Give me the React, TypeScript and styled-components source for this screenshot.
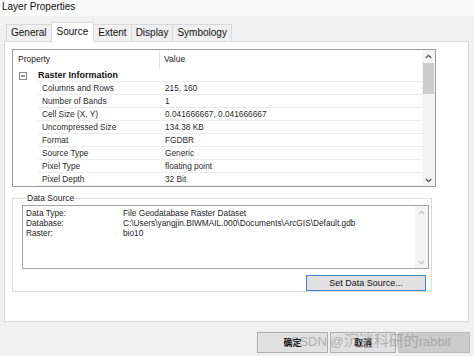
import React from 'react';
import styled, { createGlobalStyle } from 'styled-components';

const Global = createGlobalStyle`
  html, body { margin: 0; padding: 0; background: #f0f0f0; }
  body { font-family: "Liberation Sans", Arial, "Noto Sans CJK SC", sans-serif; color: #1a1a1a; }
`;

const Window = styled.div`
  width: 474px;
  height: 356px;
  background: #f0f0f0;
  position: relative;
  overflow: hidden;
  display: flex;
  flex-direction: column;
`;

const TitleBar = styled.div`
  height: 16px;
  background: #fafafa;
  font-size: 10px;
  line-height: 14px;
  padding-left: 2px;
  color: #111;
`;

const TabStrip = styled.div`
  display: flex;
  align-items: flex-end;
  height: 20px;
  margin: 6px 0 -1px 6px;
  position: relative;
  z-index: 1;
`;

const Tab = styled.div<{ $active?: boolean }>`
  box-sizing: border-box;
  height: ${p => (p.$active ? 20 : 17)}px;
  margin-bottom: ${p => (p.$active ? 0 : 1)}px;
  margin-left: -1px;
  padding: 0 ${p => (p.$active ? 5 : 4)}px;
  border: 1px solid #d9d9d9;
  border-bottom: none;
  background: ${p => (p.$active ? '#ffffff' : '#f0f0f0')};
  font-size: 10px;
  line-height: ${p => (p.$active ? 17 : 15)}px;
  color: #111;
  white-space: nowrap;
  &:first-child { margin-left: 0; }
`;

const Panel = styled.div`
  box-sizing: border-box;
  height: 281px;
  margin: 0 5px 0 4px;
  background: #ffffff;
  border: 1px solid #d9d9d9;
  padding: 7px 0 0 7px;
  display: flex;
  flex-direction: column;
`;

const Grid = styled.div`
  box-sizing: border-box;
  width: 424px;
  height: 138px;
  border: 1px solid #9c9c9c;
  display: flex;
`;

const GridBody = styled.div`
  flex: 1;
  display: flex;
  flex-direction: column;
  font-size: 8.3px;
`;

const HeaderRow = styled.div`
  display: flex;
  height: 19px;
  flex: none;
  align-items: stretch;
`;

const HeaderCell = styled.div<{ $w?: number }>`
  ${p => (p.$w ? `width: ${p.$w}px;` : 'flex: 1;')}
  box-sizing: border-box;
  padding-left: ${p => (p.$w ? 5 : 4)}px;
  line-height: 19px;
  font-size: 8.5px;
  color: #222;
  ${p => (p.$w ? 'border-right: 1px solid #e3e3e3;' : '')}
`;

const Row = styled.div`
  display: flex;
  height: 13px;
  flex: none;
`;

const Indent = styled.div`
  width: 25px;
  display: flex;
  align-items: center;
  justify-content: flex-start;
  padding-left: 6px;
  box-sizing: border-box;
`;

const Cells = styled.div`
  flex: 1;
  display: flex;
  border-bottom: 1px solid #ececec;
  box-sizing: border-box;
`;

const PropCell = styled.div<{ $bold?: boolean }>`
  width: 122px;
  box-sizing: border-box;
  padding-left: ${p => (p.$bold ? 0 : 4)}px;
  line-height: 12px;
  font-weight: ${p => (p.$bold ? 700 : 400)};
  font-size: ${p => (p.$bold ? 9 : 8.3)}px;
  color: ${p => (p.$bold ? '#111' : '#2a2a2a')};
  white-space: nowrap;
`;

const ValueCell = styled.div`
  flex: 1;
  padding-left: 5px;
  line-height: 12px;
  color: #2a2a2a;
  white-space: nowrap;
`;

const VScroll = styled.div`
  width: 13px;
  background: #f4f4f4;
  display: flex;
  flex-direction: column;
  align-items: center;
  justify-content: space-between;
`;

const ArrowBtn = styled.div`
  height: 12px;
  width: 13px;
  display: flex;
  align-items: center;
  justify-content: center;
`;

const Track = styled.div`
  flex: 1;
  width: 13px;
  display: flex;
  flex-direction: column;
  align-items: center;
`;

const Thumb = styled.div`
  width: 11px;
  height: 31px;
  margin-top: 1px;
  background: #cdcdcd;
`;

const Group = styled.fieldset`
  box-sizing: border-box;
  width: 420px;
  height: 99px;
  margin: 6px 0 0 0;
  padding: 2px 2px 0 9px;
  border: 1px solid #dcdcdc;
  min-width: 0;
`;

const Legend = styled.legend`
  font-size: 8.5px;
  line-height: 10px;
  padding: 0 1px;
  margin-left: 4px;
  color: #222;
`;

const TextBox = styled.div`
  box-sizing: border-box;
  height: 64px;
  border: 1px solid #a4a4a4;
  display: flex;
  background: #fff;
`;

const TextArea = styled.div`
  flex: 1;
  padding: 2px 0 0 3px;
  font-size: 8.3px;
  line-height: 10px;
  color: #1e1e1e;
`;

const InfoLine = styled.div`
  display: flex;
  white-space: nowrap;
`;

const InfoLabel = styled.span`
  width: 97px;
`;

const ButtonRow = styled.div<{ $pad?: string }>`
  display: flex;
  justify-content: flex-end;
  gap: 2px;
  padding: ${p => p.$pad || '0'};
`;

const Button = styled.div<{ $w: number; $h: number; $focused?: boolean; $disabled?: boolean }>`
  box-sizing: border-box;
  width: ${p => p.$w}px;
  height: ${p => p.$h}px;
  border: 1px solid ${p => (p.$focused ? '#3d86cf' : p.$disabled ? '#bcbcbc' : '#adadad')};
  background: ${p => (p.$disabled ? '#cccccc' : '#e1e1e1')};
  display: flex;
  align-items: center;
  justify-content: center;
  font-size: 9px;
  color: #111;
  white-space: nowrap;
`;

const CjkLabel = styled.span`
  font-family: "Noto Sans CJK SC", sans-serif;
  font-size: 9px;
  font-weight: 700;
`;

const Footer = styled.div`
  flex: 1;
  position: relative;
`;

const Watermark = styled.div`
  position: absolute;
  left: 290px;
  top: 331px;
  font-size: 13px;
  line-height: 18px;
  color: rgba(140, 140, 140, 0.6);
  white-space: nowrap;
  pointer-events: none;
`;

const WmCjk = styled.span`
  font-family: "Noto Sans CJK SC", sans-serif;
  font-size: 15px;
`;

const Chevron = ({ up, color }: { up?: boolean; color: string }) => (
  <svg width="7" height="5" viewBox="0 0 7 5">
    <path d={up ? 'M0.8 4 L3.5 1.3 L6.2 4' : 'M0.8 1 L3.5 3.7 L6.2 1'} fill="none" stroke={color} strokeWidth="1.2" />
  </svg>
);

const Collapse = () => (
  <svg width="8" height="8" viewBox="0 0 8 8">
    <rect x="0.5" y="0.5" width="7" height="7" fill="#fff" stroke="#8a8a8a" />
    <path d="M2 4 H6" stroke="#333" strokeWidth="1" />
  </svg>
);

const rows: [string, string][] = [
  ['Columns and Rows', '215, 160'],
  ['Number of Bands', '1'],
  ['Cell Size (X, Y)', '0.041666667, 0.041666667'],
  ['Uncompressed Size', '134.38 KB'],
  ['Format', 'FGDBR'],
  ['Source Type', 'Generic'],
  ['Pixel Type', 'floating point'],
  ['Pixel Depth', '32 Bit'],
];

const info: [string, string][] = [
  ['Data Type:', 'File Geodatabase Raster Dataset'],
  ['Database:', 'C:\\Users\\yangjin.BIWMAIL.000\\Documents\\ArcGIS\\Default.gdb'],
  ['Raster:', 'bio10'],
];

export default function App() {
  return (
    <Window>
      <Global />
      <TitleBar>Layer Properties</TitleBar>
      <TabStrip>
        <Tab>General</Tab>
        <Tab $active>Source</Tab>
        <Tab>Extent</Tab>
        <Tab>Display</Tab>
        <Tab>Symbology</Tab>
      </TabStrip>
      <Panel>
        <Grid>
          <GridBody>
            <HeaderRow>
              <HeaderCell $w={147}>Property</HeaderCell>
              <HeaderCell>Value</HeaderCell>
            </HeaderRow>
            <Row>
              <Indent><Collapse /></Indent>
              <Cells>
                <PropCell $bold>Raster Information</PropCell>
                <ValueCell />
              </Cells>
            </Row>
            {rows.map(([k, v]) => (
              <Row key={k}>
                <Indent />
                <Cells>
                  <PropCell>{k}</PropCell>
                  <ValueCell>{v}</ValueCell>
                </Cells>
              </Row>
            ))}
          </GridBody>
          <VScroll>
            <ArrowBtn><Chevron up color="#505050" /></ArrowBtn>
            <Track><Thumb /></Track>
            <ArrowBtn><Chevron color="#505050" /></ArrowBtn>
          </VScroll>
        </Grid>
        <Group>
          <Legend>Data Source</Legend>
          <TextBox>
            <TextArea>
              {info.map(([k, v]) => (
                <InfoLine key={k}>
                  <InfoLabel>{k}</InfoLabel>
                  <span>{v}</span>
                </InfoLine>
              ))}
            </TextArea>
            <VScroll>
              <ArrowBtn><Chevron up color="#c4c4c4" /></ArrowBtn>
              <Track />
              <ArrowBtn><Chevron color="#c4c4c4" /></ArrowBtn>
            </VScroll>
          </TextBox>
          <ButtonRow $pad="6px 3px 0 0">
            <Button $w={120} $h={16} $focused>Set Data Source...</Button>
          </ButtonRow>
        </Group>
      </Panel>
      <Footer>
        <ButtonRow $pad="10px 4px 0 0">
          <Button $w={71} $h={21}><CjkLabel>确定</CjkLabel></Button>
          <Button $w={66} $h={21}><CjkLabel>取消</CjkLabel></Button>
          <Button $w={72} $h={21} $disabled />
        </ButtonRow>
      </Footer>
      <Watermark>CSDN @<WmCjk>沉迷科研的</WmCjk>rabbit</Watermark>
    </Window>
  );
}
